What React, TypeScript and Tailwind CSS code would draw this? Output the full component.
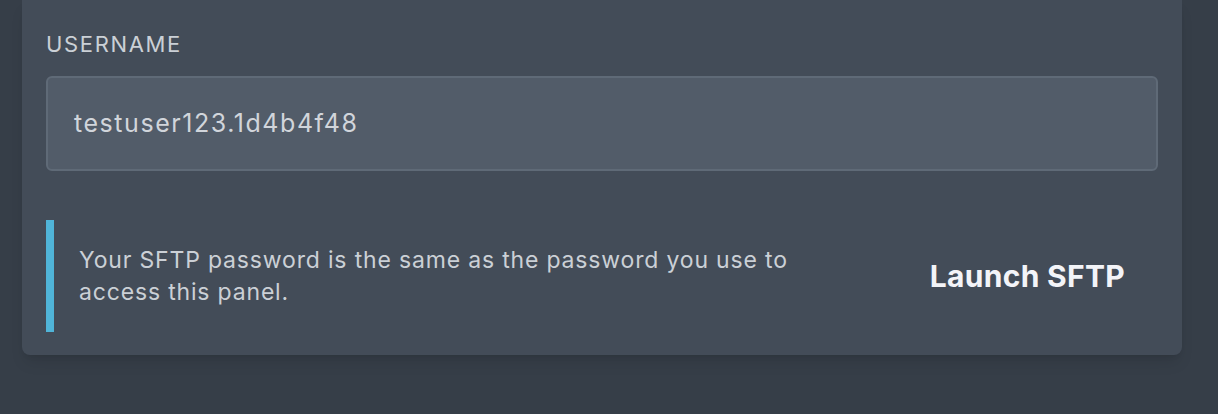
import React from 'react';

export default function App() {
  return (
    <div className="min-h-screen bg-[#363e48] px-[22px] pb-10" style={{ fontFamily: 'Inter, "Noto Sans", sans-serif' }}>
      <div className="w-[1160px] rounded-b-lg bg-[#434c58] px-6 pb-[23px] pt-[30px] shadow-lg">
        {/* Username */}
        <label className="block text-[22px] leading-[28px] uppercase tracking-[0.075em] text-[#cbd0d6]">
          Username
        </label>
        <div className="mt-[18px] flex h-[95px] items-center rounded-md border-2 border-[#5f6a77] bg-[#525c69] px-[26px]">
          <span className="text-[25px] tracking-[0.062em] text-[#d1d5db]">testuser123.1d4b4f48</span>
        </div>

        {/* Notice */}
        <div className="mt-[49px] flex h-[112px] items-center justify-between border-l-8 border-[#50b4d8] pl-[25px] pr-[33px]">
          <p className="w-[740px] text-[23px] leading-[32px] tracking-[0.036em] text-[#cbd0d6]">
            Your SFTP password is the same as the password you use to access this panel.
          </p>
          <button className="text-[30px] font-bold tracking-[0.01em] text-[#f3f4f8]">Launch SFTP</button>
        </div>
      </div>
    </div>
  );
}
